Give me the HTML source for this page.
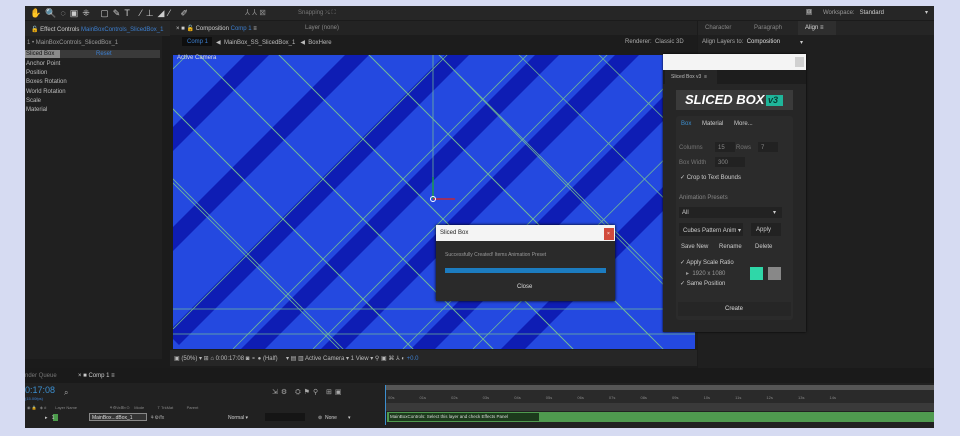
<!DOCTYPE html>
<html><head><meta charset="utf-8"><style>
*{margin:0;padding:0;box-sizing:border-box}
body{width:960px;height:436px;background:#d6dbf2;font-family:"Liberation Sans",sans-serif;font-size:6px;color:#aaa;position:relative;overflow:hidden}
.a{position:absolute}
.t{position:absolute;white-space:nowrap}
</style></head><body>
<div class="a" style="left:25px;top:6px;width:909px;height:422px;background:#1b1b1b"></div>
<div class="a" style="left:25px;top:6px;width:909px;height:14px;background:#262626"></div>
<div class="t" style="left:30px;top:8px;font-size:9px;color:#ccc;letter-spacing:4px">✋🔍◌▣⁜ ▢✎T ⁄⊥◢⁄ ✐</div>
<div class="t" style="left:245px;top:8px;font-size:8px;color:#888">⅄ ⅄ ⊠</div>
<div class="t" style="left:298px;top:10px;color:#777">Snapping ⤯ ⛶</div>
<div class="t" style="left:806px;top:9px;color:#ddd;background:#666;font-size:5px;padding:0 1px">⊡</div>
<div class="t" style="left:823px;top:10px;color:#999">Workspace:&nbsp;&nbsp; <span style="color:#ccc">Standard</span></div>
<div class="t" style="left:925px;top:9px;color:#ccc">▾</div>
<div class="a" style="left:25px;top:21px;width:137px;height:338px;background:#202020"></div>
<div class="a" style="left:25px;top:21px;width:145px;height:15px;background:#262626"></div>
<div class="t" style="left:31px;top:26px;color:#ccc">🔓 Effect Controls <span style="color:#3c7fd0">MainBoxControls_SlicedBox_1</span></div>
<div class="t" style="left:27px;top:40px;color:#999">1 • MainBoxControls_SlicedBox_1</div>
<div class="a" style="left:25px;top:50px;width:135px;height:8px;background:#3a3a3a"></div>
<div class="a" style="left:25px;top:50px;width:35px;height:8px;background:#8a8a8a"></div>
<div class="t" style="left:26px;top:51px;color:#111">Sliced Box</div>
<div class="t" style="left:96px;top:51px;color:#3c7fd0">Reset</div>
<div class="t" style="left:26px;top:60px;color:#bbb;line-height:9.2px">Anchor Point<br>Position<br>Boxes Rotation<br>World Rotation<br>Scale<br>Material</div>
<div class="a" style="left:170px;top:21px;width:527px;height:347px;background:#1c1c1c"></div>
<div class="a" style="left:170px;top:21px;width:527px;height:14px;background:#232323"></div>
<div class="t" style="left:176px;top:25px;color:#ccc">× ■ 🔓 Composition <span style="color:#3c7fd0">Comp 1</span> ≡</div>
<div class="t" style="left:305px;top:25px;color:#888">Layer (none)</div>
<div class="a" style="left:182px;top:37px;width:30px;height:9px;background:#0e0e0e"></div>
<div class="t" style="left:187px;top:39px;color:#3c7fd0">Comp 1</div>
<div class="t" style="left:216px;top:39px;color:#bbb">◀&nbsp; MainBox_SS_SlicedBox_1 &nbsp;&nbsp;◀&nbsp; BoxHere</div>
<div class="t" style="left:625px;top:39px;color:#aaa">Renderer: &nbsp;Classic 3D</div>
<svg class="a" style="left:173px;top:49px" width="522" height="300" viewBox="0 0 522 300">
<rect width="522" height="300" fill="#2449e0"/>
<g stroke="#0e1db4" stroke-width="17">
<line x1="-60" y1="150" x2="100" y2="-10"/>
<line x1="-40" y1="230" x2="240" y2="-50"/>
<line x1="0" y1="290" x2="300" y2="-10"/>
<line x1="60" y1="320" x2="390" y2="-10"/>
<line x1="140" y1="320" x2="470" y2="-10"/>
<line x1="230" y1="320" x2="560" y2="-10"/>
<line x1="320" y1="320" x2="600" y2="40"/>
</g>
<g stroke="#7cc890" stroke-width="0.8" fill="none" opacity="0.85">
<path d="M-20 40 L250 310 M20 0 L320 300 M90 -10 L400 300 M180 -10 L480 290 M260 0 L522 262 M340 0 L522 180 M420 0 L522 100 M-10 120 L180 310"/>
<path d="M-14 46 L256 316 M26 6 L326 306 M96 -4 L406 306 M186 -4 L486 296 M266 6 L522 268 M-4 130 L186 320"/>
<path d="M-8 52 L262 322 M32 12 L332 312 M102 2 L412 312 M192 2 L492 302"/>
<path d="M0 20 L20 0 M0 280 L280 0 M60 300 L360 0 M140 300 L440 0 M230 300 L522 8 M300 300 L522 80"/>
<line x1="0" y1="260" x2="522" y2="260"/><line x1="0" y1="285" x2="522" y2="285"/>
<line x1="260" y1="0" x2="260" y2="150"/>
</g>
<rect x="0" y="0" width="522" height="6" fill="#1c1c1c"/>
<text x="4" y="10" fill="#ddd" font-size="6" font-family="Liberation Sans">Active Camera</text>
<line x1="260" y1="150" x2="260" y2="128" stroke="#1c9a4a" stroke-width="1.5"/>
<line x1="260" y1="150" x2="282" y2="150" stroke="#c0283a" stroke-width="1.5"/>
<circle cx="260" cy="150" r="2.5" fill="none" stroke="#fff"/>
</svg>
<div class="a" style="left:170px;top:350px;width:527px;height:16px;background:#262626"></div>
<div class="t" style="left:174px;top:355px;color:#bbb">▣ (50%) ▾ ⊞ ⌂ 0:00:17:08 ◙ ⚬ ● (Half) &nbsp;&nbsp;&nbsp;&nbsp;▾ ▤ ▥ Active Camera ▾ 1 View ▾ ⚲ ▣ ⌘ ⅄ ◐ <span style="color:#3c7fd0">+0.0</span></div>
<div class="a" style="left:698px;top:21px;width:236px;height:347px;background:#1f1f1f"></div>
<div class="a" style="left:698px;top:21px;width:236px;height:14px;background:#252525"></div>
<div class="t" style="left:705px;top:25px;color:#888">Character</div>
<div class="t" style="left:754px;top:25px;color:#888">Paragraph</div>
<div class="a" style="left:798px;top:21px;width:38px;height:14px;background:#2e2e2e"></div>
<div class="t" style="left:805px;top:25px;color:#ddd">Align ≡</div>
<div class="t" style="left:702px;top:39px;color:#aaa">Align Layers to: &nbsp;<span style="color:#ddd">Composition</span></div>
<div class="t" style="left:800px;top:39px;color:#ccc">▾</div>
<div class="a" style="left:663px;top:54px;width:143px;height:278px;background:#262626;box-shadow:0 0 2px #000"></div>
<div class="a" style="left:663px;top:54px;width:143px;height:16px;background:#f4f4f4"></div>
<div class="a" style="left:795px;top:57px;width:9px;height:10px;background:#d0d0d0"></div>
<div class="a" style="left:663px;top:70px;width:143px;height:14px;background:#1d1d1d"></div>
<div class="a" style="left:665px;top:70px;width:52px;height:14px;background:#262626"></div>
<div class="t" style="left:671px;top:74px;color:#bbb;font-size:5px">Sliced Box v3 &nbsp;≡</div>
<div class="a" style="left:676px;top:90px;width:117px;height:20px;background:#3a3a3a"></div>
<div class="t" style="left:685px;top:92px;color:#fff;font-size:13px;font-weight:bold;font-style:italic">SLICED BOX</div>
<div class="a" style="left:766px;top:95px;width:17px;height:11px;background:#1fb59a"></div>
<div class="t" style="left:768px;top:95px;color:#083d34;font-size:9px;font-weight:bold;font-style:italic">v3</div>
<div class="a" style="left:676px;top:116px;width:117px;height:204px;background:#2b2b2b;border-radius:3px"></div>
<div class="t" style="left:681px;top:121px;color:#3c8fd0">Box</div>
<div class="t" style="left:702px;top:121px;color:#ccc">Material</div>
<div class="t" style="left:734px;top:121px;color:#ccc">More...</div>
<div class="t" style="left:679px;top:145px;color:#777">Columns</div>
<div class="a" style="left:715px;top:142px;width:20px;height:10px;background:#222"></div>
<div class="t" style="left:718px;top:145px;color:#888">15</div>
<div class="t" style="left:736px;top:145px;color:#777">Rows</div>
<div class="a" style="left:758px;top:142px;width:20px;height:10px;background:#222"></div>
<div class="t" style="left:761px;top:145px;color:#888">7</div>
<div class="t" style="left:679px;top:160px;color:#777">Box Width</div>
<div class="a" style="left:715px;top:157px;width:30px;height:10px;background:#222"></div>
<div class="t" style="left:718px;top:160px;color:#888">300</div>
<div class="t" style="left:680px;top:174px;color:#ccc">✓ Crop to Text Bounds</div>
<div class="t" style="left:679px;top:195px;color:#888">Animation Presets</div>
<div class="a" style="left:679px;top:207px;width:103px;height:11px;background:#222"></div>
<div class="t" style="left:682px;top:210px;color:#ccc">All</div>
<div class="t" style="left:773px;top:209px;color:#ccc">▾</div>
<div class="a" style="left:679px;top:223px;width:64px;height:13px;background:#222"></div>
<div class="t" style="left:683px;top:227px;color:#ccc">Cubes Pattern Anim ▾</div>
<div class="a" style="left:751px;top:223px;width:30px;height:13px;background:#222"></div>
<div class="t" style="left:756px;top:227px;color:#ccc">Apply</div>
<div class="t" style="left:681px;top:244px;color:#ccc">Save New</div>
<div class="t" style="left:719px;top:244px;color:#ccc">Rename</div>
<div class="t" style="left:755px;top:244px;color:#ccc">Delete</div>
<div class="t" style="left:680px;top:259px;color:#ccc">✓ Apply Scale Ratio</div>
<div class="t" style="left:686px;top:270px;color:#999">▸ &nbsp;1920 x 1080</div>
<div class="t" style="left:680px;top:280px;color:#ccc">✓ Same Position</div>
<div class="a" style="left:750px;top:267px;width:13px;height:13px;background:#2fd7a8"></div>
<div class="a" style="left:768px;top:267px;width:13px;height:13px;background:#888"></div>
<div class="a" style="left:678px;top:302px;width:113px;height:14px;background:#262626"></div>
<div class="t" style="left:725px;top:306px;color:#ddd">Create</div>
<div class="a" style="left:436px;top:225px;width:179px;height:76px;background:#2a2a2a;box-shadow:0 0 3px #000"></div>
<div class="a" style="left:436px;top:225px;width:179px;height:16px;background:#f4f4f4"></div>
<div class="t" style="left:440px;top:230px;color:#222;font-size:6px">Sliced Box</div>
<div class="a" style="left:604px;top:228px;width:10px;height:12px;background:#d24b3c"></div>
<div class="t" style="left:607px;top:231px;color:#fff;font-size:5px">×</div>
<div class="t" style="left:445px;top:252px;color:#999;font-size:5px">Successfully Created! Items Animation Preset</div>
<div class="a" style="left:445px;top:268px;width:161px;height:5px;background:#1c7cc0"></div>
<div class="t" style="left:517px;top:284px;color:#ddd">Close</div>
<div class="a" style="left:25px;top:368px;width:909px;height:60px;background:#212121"></div>
<div class="a" style="left:25px;top:368px;width:909px;height:15px;background:#1a1a1a"></div>
<div class="t" style="left:25px;top:373px;color:#777">nder Queue</div>
<div class="t" style="left:78px;top:373px;color:#ccc">× ■ Comp 1 ≡</div>
<div class="t" style="left:25px;top:385px;color:#3c8fd0;font-size:9px">0:17:08</div>
<div class="t" style="left:25px;top:396px;color:#3c7fd0;font-size:4px">(15.00fps)</div>
<div class="t" style="left:64px;top:388px;color:#aaa;font-size:8px">⌕</div>
<div class="t" style="left:272px;top:388px;color:#aaa;letter-spacing:3px;font-size:7px">⇲⚙ ⛭⚑⚲ ⊞▣</div>
<div class="a" style="left:385px;top:385px;width:549px;height:5px;background:#555"></div>
<div class="a" style="left:385px;top:390px;width:549px;height:18px;background:#2a2a2a"></div>
<div class="t" style="left:388px;top:395px;color:#888;word-spacing:24px;font-size:4px">00s 01s 02s 03s 04s 05s 06s 07s 08s 09s 10s 11s 12s 13s 14s</div>
<div class="t" style="left:27px;top:405px;color:#888;font-size:4px">◉ 🔒 &nbsp;&nbsp;◈ # &nbsp;&nbsp;&nbsp;&nbsp;&nbsp;&nbsp;&nbsp;Layer Name &nbsp;&nbsp;&nbsp;&nbsp;&nbsp;&nbsp;&nbsp;&nbsp;&nbsp;&nbsp;&nbsp;&nbsp;&nbsp;&nbsp;&nbsp;&nbsp;&nbsp;&nbsp;&nbsp;&nbsp;&nbsp;&nbsp;&nbsp;&nbsp;&nbsp;&nbsp;&nbsp;&nbsp;⚘⚙\fx⊞◐⊙ &nbsp;&nbsp;&nbsp;Mode &nbsp;&nbsp;&nbsp;&nbsp;&nbsp;&nbsp;&nbsp;&nbsp;&nbsp;&nbsp;&nbsp;T TrkMat &nbsp;&nbsp;&nbsp;&nbsp;&nbsp;&nbsp;&nbsp;&nbsp;&nbsp;&nbsp;&nbsp;Parent</div>
<div class="a" style="left:385px;top:403px;width:549px;height:8px;background:#3a3a3a"></div>
<div class="a" style="left:53px;top:414px;width:5px;height:7px;background:#4b9b4b"></div>
<div class="t" style="left:45px;top:415px;color:#ccc;font-size:5px">▸ &nbsp;&nbsp;1</div>
<div class="a" style="left:89px;top:413px;width:58px;height:8px;border:1px solid #888;background:#333"></div>
<div class="t" style="left:92px;top:415px;color:#ddd;font-size:5px">MainBox...dBox_1</div>
<div class="t" style="left:150px;top:415px;color:#aaa;font-size:5px">⚘⚙/fx</div>
<div class="t" style="left:228px;top:415px;color:#ccc;font-size:5px">Normal ▾</div>
<div class="a" style="left:265px;top:413px;width:40px;height:8px;background:#151515"></div>
<div class="t" style="left:318px;top:415px;color:#ccc;font-size:5px">⊚ &nbsp;None &nbsp;&nbsp;&nbsp;&nbsp;&nbsp;&nbsp;&nbsp;▾</div>
<div class="a" style="left:387px;top:412px;width:547px;height:10px;background:#4f9a4f"></div>
<div class="a" style="left:389px;top:413px;width:150px;height:8px;background:#1c3a1c"></div>
<div class="t" style="left:390px;top:414px;color:#ddd;font-size:4.5px">MainBoxControls: Select this layer and check Effects Panel</div>
<div class="a" style="left:385px;top:385px;width:1px;height:40px;background:#3c8fd0"></div>
</body></html>
